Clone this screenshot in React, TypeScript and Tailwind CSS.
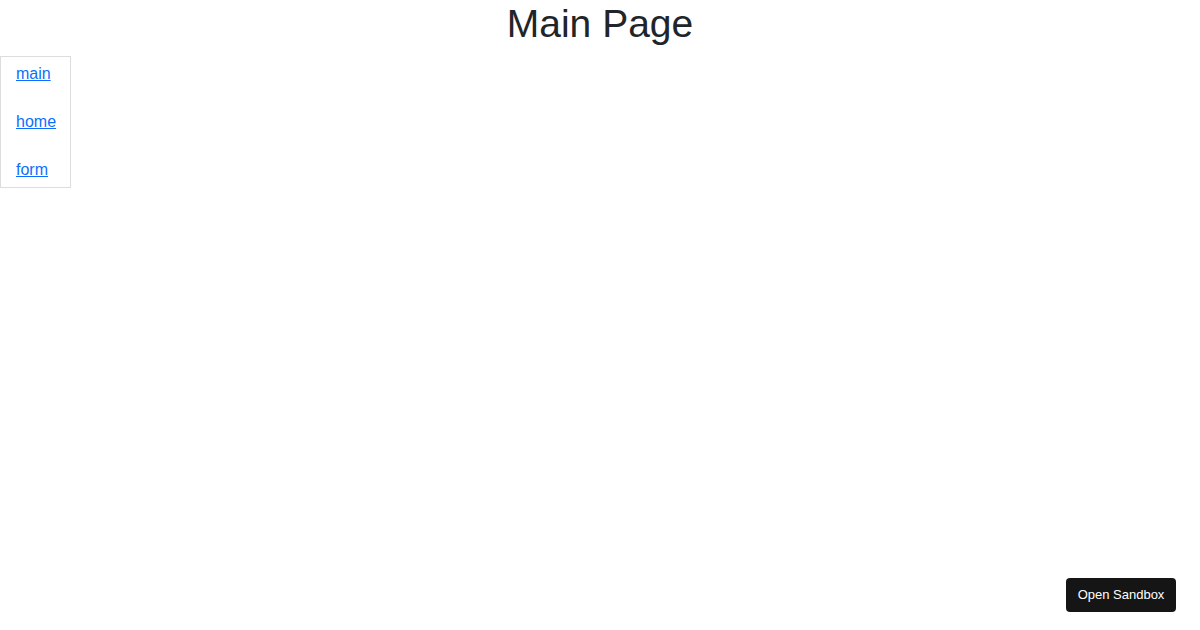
const links = ["main", "home", "form"];

const App = () => {
  return (
    <div className="min-h-[630px] bg-white text-[#212529] font-['Liberation_Sans',Arial,sans-serif]">
      <h1 className="text-center text-[39px] leading-[48px] font-normal mb-2">
        Main Page
      </h1>
      <nav className="w-[71px] border border-[#dddddd] px-[15px] pt-[5px] pb-[5px] flex flex-col gap-6">
        {links.map((link) => (
          <a
            key={link}
            href="#"
            className="text-base leading-6 text-[#0d6efd] underline w-fit"
          >
            {link}
          </a>
        ))}
      </nav>
      <button className="fixed right-6 bottom-[18px] h-[34px] w-[110px] rounded bg-[#151515] text-white text-[13px] font-['Liberation_Sans',Arial,sans-serif]">
        Open Sandbox
      </button>
    </div>
  );
};

export default App;
